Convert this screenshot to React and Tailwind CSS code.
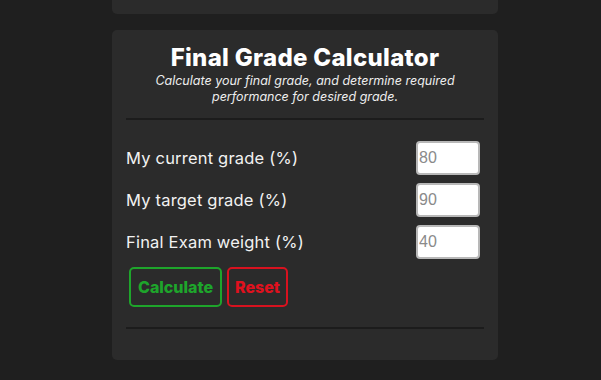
import React, { useState } from 'react';

const fields = [
  { key: 'current', label: 'My current grade (%)', placeholder: '80' },
  { key: 'target', label: 'My target grade (%)', placeholder: '90' },
  { key: 'weight', label: 'Final Exam weight (%)', placeholder: '40' },
];

export default function App() {
  const [values, setValues] = useState({ current: '', target: '', weight: '' });

  return (
    <div className="w-full min-h-screen bg-[#1f1f1f] flex flex-col items-center pl-[9px] font-['Inter',sans-serif] text-white">
      {/* previous card, scrolled mostly out of view */}
      <div className="w-[386px] h-[14px] bg-[#2b2b2b] rounded-b-[5px]" />

      <div className="w-[386px] mt-4 bg-[#2b2b2b] rounded-[5px] px-[14px] pt-[13px] pb-[31px]">
        <h1 className="text-center text-[24px] font-extrabold leading-[30px] tracking-[0.3px]">Final Grade Calculator</h1>
        <p className="text-center italic text-[12.5px] leading-[16px] px-6 text-[#eeeeee]">
          Calculate your final grade, and determine required performance for desired grade.
        </p>
        <div className="h-[2px] bg-[#1c1c1c] mt-[13px]" />

        <div className="flex flex-col gap-2 mt-[21px]">
          {fields.map((f) => (
            <div key={f.key} className="flex items-center justify-between">
              <label className="text-[16.5px] text-[#f2f2f2] tracking-[0.2px]">{f.label}</label>
              <input
                value={values[f.key]}
                onChange={(e) => setValues({ ...values, [f.key]: e.target.value })}
                placeholder={f.placeholder}
                className="w-[64px] h-[34px] mr-[4px] bg-white rounded-[4px] border-2 border-[#b8b8b8] px-[1px] text-[16px] text-black placeholder:text-[#8a8a8a] font-['Liberation_Sans',sans-serif] outline-none"
              />
            </div>
          ))}
        </div>

        <div className="flex gap-[5px] mt-[8px] ml-[3px]">
          <button className="h-[40px] px-[7px] border-2 border-[#1ea52b] rounded-[5px] text-[#1ea52b] font-extrabold text-[16px]">
            Calculate
          </button>
          <button className="h-[40px] px-[6px] border-2 border-[#d8121f] rounded-[5px] text-[#e0111e] font-extrabold text-[16px]">
            Reset
          </button>
        </div>

        <div className="h-[2px] bg-[#1c1c1c] mt-[20px]" />
      </div>
    </div>
  );
}
